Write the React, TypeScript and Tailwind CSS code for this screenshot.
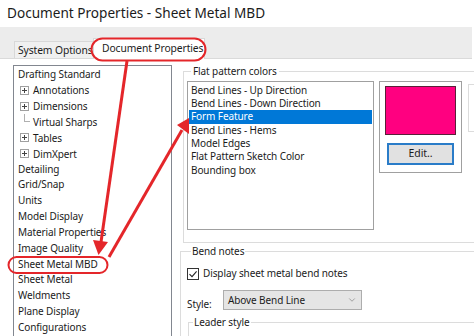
import { ChevronDown } from 'lucide-react'

type TreeItem = { label: string; kind?: 'plus' | 'leaf' }

const TREE: TreeItem[] = [
  { label: 'Drafting Standard' },
  { label: 'Annotations', kind: 'plus' },
  { label: 'Dimensions', kind: 'plus' },
  { label: 'Virtual Sharps', kind: 'leaf' },
  { label: 'Tables', kind: 'plus' },
  { label: 'DimXpert', kind: 'plus' },
  { label: 'Detailing' },
  { label: 'Grid/Snap' },
  { label: 'Units' },
  { label: 'Model Display' },
  { label: 'Material Properties' },
  { label: 'Image Quality' },
  { label: 'Sheet Metal MBD' },
  { label: 'Sheet Metal' },
  { label: 'Weldments' },
  { label: 'Plane Display' },
  { label: 'Configurations' },
]

const COLORS = [
  'Bend Lines - Up Direction',
  'Bend Lines - Down Direction',
  'Form Feature',
  'Bend Lines - Hems',
  'Model Edges',
  'Flat Pattern Sketch Color',
  'Bounding box',
]

// ── Tree row ────────────────────────────────────────────────────────────────
function TreeRow({ item }: { item: TreeItem }) {
  if (!item.kind) {
    return <div className="h-[15.85px] leading-[15.85px] pl-[4px] whitespace-nowrap">{item.label}</div>
  }
  return (
    <div className="h-[15.85px] flex items-center whitespace-nowrap">
      <div className="w-[19px] h-4 flex items-center pl-[6px]">
        {item.kind === 'plus' ? (
          <div className="w-[9px] h-[9px] border border-[#a0a0a0] bg-white flex items-center justify-center relative">
            <div className="w-[5px] h-px bg-[#444]" />
            <div className="absolute w-px h-[5px] bg-[#444]" />
          </div>
        ) : (
          <div className="w-[9px] h-4 flex flex-col">
            <div className="ml-[4px] w-px h-2 bg-[#b0b0b0]" />
            <div className="ml-[4px] w-[6px] h-px bg-[#b0b0b0] -mt-px" />
          </div>
        )}
      </div>
      <span className="leading-4">{item.label}</span>
    </div>
  )
}

// ── Annotation overlay ──────────────────────────────────────────────────────
function Annotations() {
  return (
    <svg className="absolute inset-0 pointer-events-none" width="474" height="336" viewBox="0 0 474 336">
      <g stroke="#e4262a" fill="none">
        <rect x="91.5" y="38.5" width="114" height="22" rx="11" strokeWidth="2" />
        <rect x="8.5" y="257" width="99" height="16" rx="8" strokeWidth="2" />
        <line x1="127" y1="61" x2="101" y2="242" strokeWidth="3" />
        <line x1="109" y1="257" x2="182" y2="130" strokeWidth="3" />
      </g>
      <polygon points="98.5,255 93,240 108,242" fill="#e4262a" />
      <polygon points="189,118 177,125 189,134" fill="#e4262a" />
    </svg>
  )
}

export default function App() {
  return (
    <div className="relative w-[474px] h-[336px] overflow-hidden bg-white text-[#1b1b1b] font-['Noto_Sans',sans-serif] text-[10px] tracking-[-0.1px]">
      {/* Title */}
      <div className="h-[27px] pl-[7px] flex items-center text-[13.6px] tracking-normal">
        Document Properties - Sheet Metal MBD
      </div>

      {/* Tab strip */}
      <div className="h-[32px] mr-[2px] bg-[#ececec] border-b border-[#dadada] flex items-end pl-[14px] text-[10.3px]">
        <div className="w-[79px] h-[17px] pl-[3px] border-l border-t border-[#d8d8d8] bg-[#f0f0f0] leading-[17px] whitespace-nowrap">System Options</div>
        <div className="w-[112px] h-[21px] pl-[8px] bg-white border-x border-t border-[#d8d8d8] leading-[18px] -mb-px whitespace-nowrap">Document Properties</div>
      </div>

      {/* Body */}
      <div className="flex pt-[6px]">
        {/* Tree */}
        <div className="ml-[13px] w-[159px] h-[300px] border border-[#828790] pt-[0.5px] shrink-0">
          {TREE.map(t => (
            <TreeRow key={t.label} item={t} />
          ))}
        </div>

        {/* Right side */}
        <div className="flex-1 ml-[8px] overflow-hidden">
          {/* Flat pattern colors */}
          <fieldset className="ml-[3px] w-[320px] h-[178px] border border-[#dcdcdc] pl-[3px] pb-[10px]">
            <legend className="ml-[4px] px-[2px] leading-[13px]">Flat pattern colors</legend>
            <div className="flex items-start mt-[3px]">
              <div className="w-[187px] h-[149px] border border-[#a0a0a0] pt-[1.5px] pl-px pr-px">
                {COLORS.map(c => (
                  <div
                    key={c}
                    className={`h-[13.4px] leading-[13.4px] pl-[2px] whitespace-nowrap ${
                      c === 'Form Feature' ? 'bg-[#0078d7] text-white' : ''
                    }`}
                  >
                    {c}
                  </div>
                ))}
              </div>
              <div className="ml-[5px] w-[83px] h-[92px] border border-[#a0a0a0] flex flex-col items-center pt-[4px]">
                <div className="w-[71px] h-[49px] bg-[#ff0080] border border-[#5a2038]" />
                <div className="mt-[8px] w-[67px] h-[22px] bg-[#e1e1e1] border-2 border-[#2a7cc8] flex items-center justify-center text-[10.5px]">
                  Edit..
                </div>
              </div>
              <div className="ml-[6px] mt-[3px] w-[40px] h-[48px] border border-[#dcdcdc]" />
            </div>
          </fieldset>

          {/* Bend notes */}
          <fieldset className="mt-[2px] w-[320px] h-[120px] border border-[#dcdcdc] pl-[6px]">
            <legend className="ml-[4px] px-[1px] leading-[13px]">Bend notes</legend>
            <div className="flex items-center mt-[9px] h-[13px]">
              <div className="w-[12px] h-[12px] border border-[#333] flex items-center justify-center">
                <svg width="10" height="10" viewBox="0 0 10 10">
                  <path d="M1.5 5.2 L4 7.6 L8.6 2.4" stroke="#222" strokeWidth="1.1" fill="none" />
                </svg>
              </div>
              <span className="ml-[4px] leading-[13px]">Display sheet metal bend notes</span>
            </div>
            <div className="flex items-end mt-[10px]">
              <span className="w-[36px] leading-[13px] mb-[-1px]">Style:</span>
              <div className="w-[139px] h-[20px] bg-[#e5e5e5] border border-[#adadad] flex items-center justify-between pl-[4px] pr-[4px]">
                <span>Above Bend Line</span>
                <ChevronDown size={10} strokeWidth={1.5} className="text-[#777]" />
              </div>
            </div>
            <fieldset className="mt-[6px] ml-px w-[300px] h-[40px] border border-[#dcdcdc]">
              <legend className="ml-[4px] px-[1px] leading-[13px]">Leader style</legend>
            </fieldset>
          </fieldset>
        </div>
      </div>

      <Annotations />
    </div>
  )
}
